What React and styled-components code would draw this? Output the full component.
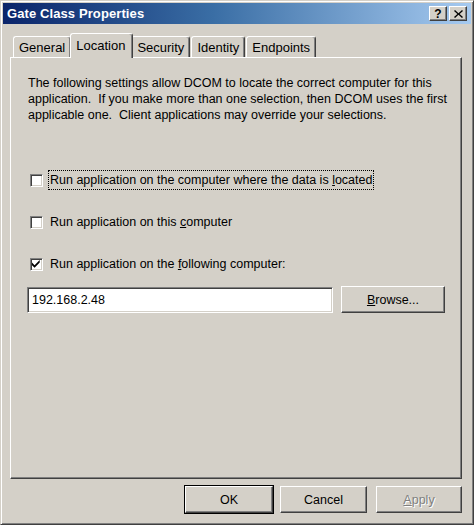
import React from "react";
import styled, { createGlobalStyle } from "styled-components";

const GlobalStyle = createGlobalStyle`
  html, body {
    margin: 0;
    padding: 0;
    background: #d4d0c8;
  }
  body {
    font-family: "Liberation Sans", Arial, sans-serif;
    font-size: 12px;
    color: #000;
  }
`;

const tabs = ["General", "Location", "Security", "Identity", "Endpoints"];

const options = [
  { id: "data", before: "Run application on the computer where the data is ", key: "l", after: "ocated", checked: false, focused: true },
  { id: "this", before: "Run application on this ", key: "c", after: "omputer", checked: false },
  { id: "following", before: "Run application on the ", key: "f", after: "ollowing computer:", checked: true },
];

const CheckMark = () => (
  <svg width="9" height="9" viewBox="0 0 7 7">
    <path d="M0 2 L2 4 L6 0 L6 2 L2 6 L0 4 Z" fill="#000" />
  </svg>
);

const App = () => {
  return (
    <>
      <GlobalStyle />
      <Window>
        <TitleBar>
          <Title>Gate Class Properties</Title>
          <Captions>
            <CaptionButton>?</CaptionButton>
            <CaptionButton>
              <svg width="9" height="8" viewBox="0 0 9 8">
                <path d="M1 0 L4.5 3.2 L8 0 L9 1 L5.6 4 L9 7 L8 8 L4.5 4.8 L1 8 L0 7 L3.4 4 L0 1 Z" fill="#000" />
              </svg>
            </CaptionButton>
          </Captions>
        </TitleBar>

        <Content>
          <TabStrip>
            {tabs.map((t) => (
              <Tab key={t} $active={t === "Location"}>
                {t}
              </Tab>
            ))}
          </TabStrip>

          <Panel>
            <Description>
              The following settings allow DCOM to locate the correct computer for this
              <br />
              application.&nbsp; If you make more than one selection, then DCOM uses the first
              <br />
              applicable one.&nbsp; Client applications may override your selections.
            </Description>

            <Options>
              {options.map((o) => (
                <CheckRow key={o.id}>
                  <CheckBox>{o.checked && <CheckMark />}</CheckBox>
                  <CheckLabel $focused={o.focused}>
                    {o.before}
                    <u>{o.key}</u>
                    {o.after}
                  </CheckLabel>
                </CheckRow>
              ))}
            </Options>

            <ComputerRow>
              <TextInput>192.168.2.48</TextInput>
              <Button $width={104}>
                <u>B</u>rowse...
              </Button>
            </ComputerRow>
          </Panel>

          <Footer>
            <Button $width={88} $default>
              OK
            </Button>
            <Button $width={87}>Cancel</Button>
            <Button $width={86} $disabled>
              <u>A</u>pply
            </Button>
          </Footer>
        </Content>
      </Window>
    </>
  );
};

export default App;

const Window = styled.div`
  width: 474px;
  height: 525px;
  box-sizing: border-box;
  background: #d4d0c8;
  border-top: 1px solid #d4d0c8;
  border-left: 1px solid #d4d0c8;
  border-right: 1px solid #404040;
  border-bottom: 1px solid #404040;
  box-shadow: inset 1px 1px #fff, inset -1px -1px #808080;
  padding: 2px;
  display: flex;
  flex-direction: column;
`;

const TitleBar = styled.div`
  height: 21px;
  display: flex;
  align-items: center;
  justify-content: space-between;
  padding: 0 4px 0 4px;
  background: linear-gradient(to right, #0a246a 0%, #3a6ea5 45%, #a6caf0 100%);
`;

const Title = styled.div`
  color: #fff;
  font-weight: bold;
  font-size: 13px;
  letter-spacing: 0.1px;
`;

const Captions = styled.div`
  display: flex;
  gap: 2px;
`;

const CaptionButton = styled.div`
  width: 18px;
  height: 15px;
  box-sizing: border-box;
  background: #d4d0c8;
  border-top: 1px solid #fff;
  border-left: 1px solid #fff;
  border-right: 1px solid #404040;
  border-bottom: 1px solid #404040;
  box-shadow: inset -1px -1px #808080;
  display: grid;
  place-items: center;
  font-weight: bold;
  font-size: 12px;
  line-height: 1;
`;

const Content = styled.div`
  flex: 1;
  display: flex;
  flex-direction: column;
  padding: 9px 9px 0 7px;
`;

const TabStrip = styled.div`
  display: flex;
  align-items: flex-end;
  height: 24px;
  padding-left: 3px;
  position: relative;
  z-index: 1;
`;

const Tab = styled.div`
  height: ${(p) => (p.$active ? "25px" : "21px")};
  box-sizing: border-box;
  display: flex;
  align-items: center;
  padding: ${(p) => (p.$active ? "0 7px 2px 5px" : "0 5px 0 5px")};
  margin: ${(p) => (p.$active ? "0 -2px -1px -2px" : "0 1px 0 0")};
  background: #d4d0c8;
  border-top: 1px solid #fff;
  border-left: 1px solid #fff;
  border-right: 1px solid #404040;
  border-radius: 3px 3px 0 0;
  box-shadow: inset -1px 0 #808080;
  font-size: 13px;
  position: relative;
  z-index: ${(p) => (p.$active ? 2 : 0)};
`;

const Panel = styled.div`
  height: 422px;
  box-sizing: border-box;
  border-top: 1px solid #fff;
  border-left: 1px solid #fff;
  border-right: 1px solid #404040;
  border-bottom: 1px solid #404040;
  box-shadow: inset -1px -1px #808080;
  padding: 17px 10px 0 17px;
  display: flex;
  flex-direction: column;
`;

const Description = styled.p`
  margin: 0;
  font-size: 12.5px;
  line-height: 16px;
  white-space: nowrap;
`;

const Options = styled.div`
  display: flex;
  flex-direction: column;
  gap: 28px;
  margin-top: 50px;
  padding-left: 2px;
`;

const CheckRow = styled.div`
  display: flex;
  align-items: center;
  gap: 6px;
  height: 14px;
`;

const CheckBox = styled.div`
  width: 13px;
  height: 13px;
  box-sizing: border-box;
  background: #fff;
  border-top: 1px solid #808080;
  border-left: 1px solid #808080;
  border-right: 1px solid #fff;
  border-bottom: 1px solid #fff;
  box-shadow: inset 1px 1px #404040, inset -1px -1px #d4d0c8;
  display: grid;
  place-items: center;
`;

const CheckLabel = styled.span`
  font-size: 12.5px;
  padding: 2px 1px;
  outline: ${(p) => (p.$focused ? "1px dotted #000" : "none")};
`;

const ComputerRow = styled.div`
  display: flex;
  align-items: center;
  gap: 8px;
  margin-top: 15px;
  margin-left: -1px;
`;

const TextInput = styled.div`
  width: 306px;
  height: 26px;
  box-sizing: border-box;
  background: #fff;
  border-top: 1px solid #808080;
  border-left: 1px solid #808080;
  border-right: 1px solid #fff;
  border-bottom: 1px solid #fff;
  box-shadow: inset 1px 1px #404040, inset -1px -1px #d4d0c8;
  padding: 0 4px;
  display: flex;
  align-items: center;
  font-size: 12.5px;
`;

const Button = styled.div`
  width: ${(p) => p.$width}px;
  height: 27px;
  box-sizing: border-box;
  background: #d4d0c8;
  border-top: 1px solid #fff;
  border-left: 1px solid #fff;
  border-right: 1px solid #404040;
  border-bottom: 1px solid #404040;
  box-shadow: inset -1px -1px #808080;
  display: flex;
  align-items: center;
  justify-content: center;
  font-size: 12.5px;
  color: ${(p) => (p.$disabled ? "#808080" : "#000")};
  text-shadow: ${(p) => (p.$disabled ? "1px 1px #fff" : "none")};
  ${(p) =>
    p.$default &&
    `
    outline: 1px solid #000;
    outline-offset: 0;
  `}
`;

const Footer = styled.div`
  display: flex;
  justify-content: flex-end;
  gap: 7px;
  margin-top: 7px;
  & > :last-child {
    margin-left: 2px;
  }
`;
